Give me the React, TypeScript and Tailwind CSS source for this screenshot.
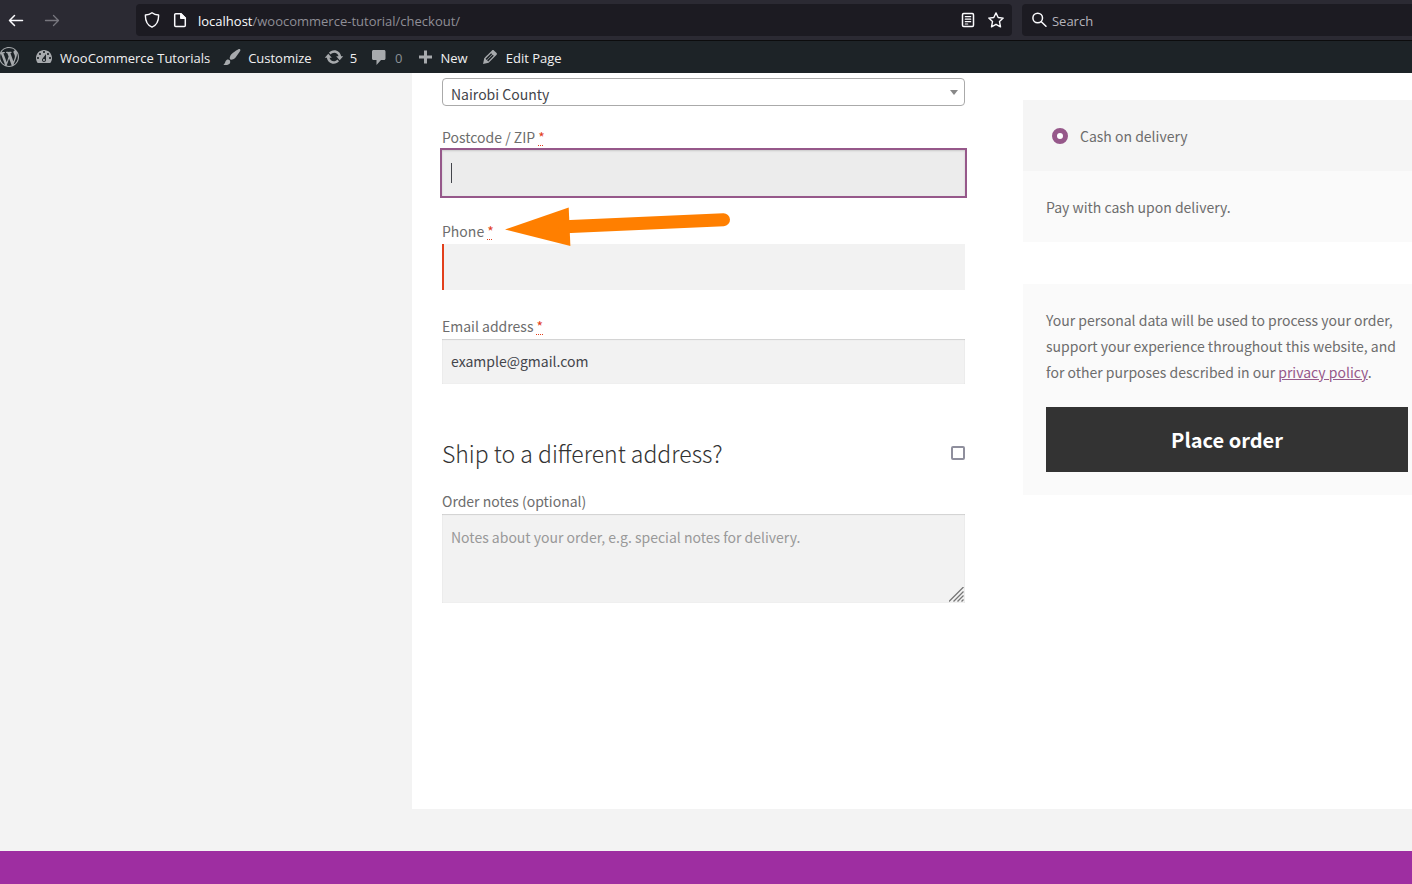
import React, { useState } from "react";

const adminIcons = {
  wordpress:
    "M20 10c0-5.51-4.49-10-10-10C4.48 0 0 4.49 0 10c0 5.52 4.48 10 10 10 5.51 0 10-4.48 10-10zM7.78 15.37L4.37 6.22c.55-.02 1.17-.08 1.17-.08.5-.06.44-1.13-.06-1.11 0 0-1.45.11-2.37.11-.18 0-.37 0-.58-.01C4.12 2.69 6.87 1.11 10 1.11c2.33 0 4.45.87 6.05 2.34-.68-.11-1.65.39-1.65 1.58 0 .74.45 1.36.9 2.1.35.61.55 1.36.55 2.46 0 1.49-1.4 5-1.4 5l-3.03-8.37c.54-.02.82-.17.82-.17.5-.05.44-1.25-.06-1.22 0 0-1.44.12-2.38.12-.87 0-2.33-.12-2.33-.12-.5-.03-.56 1.2-.06 1.22l.92.08 1.26 3.41zM17.41 10c.24-.64.74-1.87.43-4.25.7 1.29 1.05 2.71 1.05 4.25 0 3.29-1.73 6.24-4.4 7.78.97-2.59 1.94-5.2 2.92-7.78zM6.1 18.09C3.12 16.65 1.11 13.53 1.11 10c0-1.3.23-2.48.72-3.59C3.25 10.3 4.67 14.2 6.1 18.09zm4.03-6.63l2.58 6.98c-.86.29-1.76.45-2.71.45-.79 0-1.57-.11-2.29-.33.81-2.38 1.62-4.74 2.42-7.1z",
  dashboard:
    "M3.76 16h12.48c1.1-1.37 1.76-3.11 1.76-5 0-4.42-3.58-8-8-8s-8 3.58-8 8c0 1.89.66 3.63 1.76 5zM10 4c.55 0 1 .45 1 1s-.45 1-1 1-1-.45-1-1 .45-1 1-1zM6 6c.55 0 1 .45 1 1s-.45 1-1 1-1-.45-1-1 .45-1 1-1zm8 0c.55 0 1 .45 1 1s-.45 1-1 1-1-.45-1-1 .45-1 1-1zm-5.37 5.55L12 7v6c0 1.1-.9 2-2 2s-2-.9-2-2c0-.57.24-1.08.63-1.45zM4 10c.55 0 1 .45 1 1s-.45 1-1 1-1-.45-1-1 .45-1 1-1zm12 0c.55 0 1 .45 1 1s-.45 1-1 1-1-.45-1-1 .45-1 1-1zm-5 3c0-.55-.45-1-1-1s-1 .45-1 1 .45 1 1 1 1-.45 1-1z",
  brush:
    "M18.33 3.57s.27-.8-.31-1.36c-.53-.52-1.22-.24-1.22-.24-.61.3-5.76 3.47-7.67 5.57-.86.96-2.06 3.79-1.09 4.82.92.98 3.96-.17 4.79-1 2.06-2.06 5.21-7.17 5.5-7.79zM1.4 17.65c2.37-1.56 1.46-3.41 3.23-4.64.93-.65 2.22-.62 3.08.29.63.67.8 2.57-.16 3.46-1.57 1.45-4 1.55-6.15.89z",
  update:
    "M10.2 3.28c3.53 0 6.43 2.61 6.92 6h2.08l-3.5 4-3.5-4h2.32c-.45-1.97-2.21-3.45-4.32-3.45-1.45 0-2.73.71-3.54 1.78L4.95 5.66C6.23 4.2 8.11 3.28 10.2 3.28zm-.4 13.44c-3.52 0-6.43-2.61-6.92-6H.8l3.5-4c1.17 1.33 2.33 2.67 3.5 4H5.48c.45 1.97 2.21 3.45 4.32 3.45 1.45 0 2.73-.71 3.54-1.78l1.71 1.95c-1.28 1.46-3.15 2.38-5.25 2.38z",
  comment:
    "M4.5 3h10.5c.8 0 1.5.7 1.5 1.5v7c0 .8-.7 1.5-1.5 1.5h-3l-4.5 5v-5H4.5c-.8 0-1.5-.7-1.5-1.5v-7C3 3.7 3.7 3 4.5 3z",
  plus: "M17 8.500v3h-5v5H9v-5H4v-3h5v-5h3v5h5z",
  edit: "M13.89 3.39l2.71 2.72c.46.46.42 1.24.03 1.64l-8.01 8.02-5.56 1.16 1.16-5.58s7.6-7.63 7.99-8.03c.39-.39 1.22-.39 1.68.07zm-2.73 2.79l-5.59 5.61 1.11 1.11 5.54-5.65zm-2.97 8.23l5.58-5.6-1.07-1.08-5.59 5.6z",
};

const adminLinks: { icon: keyof typeof adminIcons; label: string; muted?: boolean }[] = [
  { icon: "dashboard", label: "WooCommerce Tutorials" },
  { icon: "brush", label: "Customize" },
  { icon: "update", label: "5" },
  { icon: "comment", label: "0", muted: true },
  { icon: "plus", label: "New" },
  { icon: "edit", label: "Edit Page" },
];

const AdminIcon = ({ name }: { name: keyof typeof adminIcons }) => (
  <svg viewBox="0 0 20 20" className="size-5 shrink-0 fill-[#a7aaad]" aria-hidden="true">
    <path d={adminIcons[name]} />
  </svg>
);

const Required = () => (
  <abbr
    title="required"
    className="text-[#e2401c] underline decoration-dotted decoration-1 underline-offset-2"
  >
    *
  </abbr>
);

const BrowserBar = () => (
  <div className="flex items-center h-[41px] bg-[#2b2a33] border-b border-[#0c0c0d] text-[13px] font-['Open_Sans',sans-serif]">
    <div className="flex items-center gap-5 w-[136px] pl-2 shrink-0">
      <button type="button" aria-label="Back" className="text-[#fbfbfe]">
        <svg viewBox="0 0 16 16" className="size-4" fill="none" stroke="currentColor" strokeWidth="1.5" strokeLinecap="round" strokeLinejoin="round">
          <path d="M14.5 8.500H1.500M6.500 3.500L1.500 8.500 6.500 13.500" />
        </svg>
      </button>
      <button type="button" aria-label="Forward" className="text-[#77767e]">
        <svg viewBox="0 0 16 16" className="size-4" fill="none" stroke="currentColor" strokeWidth="1.3" strokeLinecap="round" strokeLinejoin="round">
          <path d="M1.500 8.500h13M9.500 3.500L14.500 8.500 9.500 13.500" />
        </svg>
      </button>
    </div>

    {/* Address field */}
    <div className="flex items-center flex-[878] h-8 px-2 bg-[#1c1b22] rounded text-[#fbfbfe]">
      <svg viewBox="0 0 16 16" className="size-4 shrink-0" fill="none" stroke="currentColor" strokeWidth="1.4" strokeLinejoin="round">
        <path d="M8 .8C6.2 2.2 3.8 2.9 1.4 3c-.2 5.5 1.7 10.2 6.6 12.2C12.9 13.2 14.8 8.5 14.6 3 12.2 2.9 9.8 2.2 8 .8z" />
      </svg>
      <svg viewBox="0 0 16 16" className="size-4 shrink-0 ml-3" fill="none" stroke="currentColor" strokeWidth="1.5" strokeLinejoin="round">
        <path d="M3.7 1.7h5.3l4.3 4.3v7.4a1 1 0 0 1-1 1H3.7a1 1 0 0 1-1-1V2.7a1 1 0 0 1 1-1z" />
        <path d="M8.8 1.7v4.5h4.5z" fill="currentColor" />
      </svg>
      <span className="ml-2.5 pt-1 flex-1 text-[#8f8e96]">
        <span className="text-[#fbfbfe]">localhost</span>/woocommerce-tutorial/checkout/
      </span>
      <button type="button" aria-label="Reader view">
        <svg viewBox="0 0 16 16" className="size-4" fill="none" stroke="currentColor" strokeWidth="1.5" strokeLinecap="round">
          <rect x="2.500" y="1.500" width="11" height="13" rx="1.200" />
          <path d="M5.3 4.7h5.4M5.3 7.2h5.4M5.3 9.7h5.4M5.3 12h2.4" strokeWidth="1.2" />
        </svg>
      </button>
      <button type="button" aria-label="Bookmark this page" className="ml-3">
        <svg viewBox="0 0 16 16" className="size-4" fill="none" stroke="currentColor" strokeWidth="1.4" strokeLinejoin="round">
          <path d="M8 .9l2.2 4.6 5 .6-3.7 3.5 1 5.2L8 12.3l-4.5 2.5 1-5.2L.8 6.1l5-.6z" />
        </svg>
      </button>
    </div>

    <label className="flex items-center flex-[388] h-8 ml-2.5 pl-2.5 bg-[#1c1b22] rounded-l text-[#fbfbfe]">
      <svg viewBox="0 0 16 16" className="size-4 shrink-0" fill="none" stroke="currentColor" strokeWidth="1.5" strokeLinecap="round">
        <circle cx="5.700" cy="6" r="4.800" />
        <path d="M9.300 9.700L14 14.300" />
      </svg>
      <input
        type="text"
        aria-label="Search"
        placeholder="Search"
        className="flex-1 min-w-0 ml-1 pt-1 bg-transparent outline-none placeholder:text-[#b5b4bb]"
      />
    </label>
  </div>
);

const AdminBar = () => (
  <nav className="flex items-center h-8 bg-[#1d2327] text-[13px] font-['Open_Sans',sans-serif]">
    <a href="#about" aria-label="About WordPress" className="-ml-px mr-[15px]">
      <AdminIcon name="wordpress" />
    </a>
    <div className="flex items-center gap-3">
      {adminLinks.map((link) => (
        <a key={link.icon} href={`#${link.icon}`} className="flex items-center gap-1.5">
          <AdminIcon name={link.icon} />
          <span className={link.muted ? "pt-1 text-[#8a9095]" : "pt-1 text-[#f0f0f1]"}>
            {link.label}
          </span>
        </a>
      ))}
    </div>
  </nav>
);

const BillingForm = () => {
  const [shipElsewhere, setShipElsewhere] = useState(false);

  return (
    <div className="pt-[5px]">
      <div className="relative mb-[18px]">
        <select
          aria-label="County"
          defaultValue="Nairobi County"
          className="block appearance-none w-full h-7 pt-0.5 pl-2 pr-6 bg-white border border-[#aaa] rounded text-[14px] text-[#43454b]"
        >
          <option>Nairobi County</option>
        </select>
        <span className="absolute right-[7px] top-3 border-x-4 border-t-5 border-x-transparent border-t-[#888] pointer-events-none" />
      </div>

      <div className="mb-[22px]">
        <label htmlFor="postcode" className="block">
          Postcode / ZIP <Required />
        </label>
        <div className="relative">
          <input
            id="postcode"
            type="text"
            className="block w-full h-[46px] px-[9px] bg-[#ececec] text-[#43454b] text-[14px] caret-transparent shadow-[inset_0_1px_2px_rgba(0,0,0,0.15)] outline-2 outline-[#96588a]"
          />
          <span className="absolute left-[9px] top-[13px] w-px h-5 bg-[#43454b]" />
        </div>
      </div>

      <div className="relative mb-[23px]">
        <label htmlFor="phone" className="block">
          Phone <Required />
        </label>
        <input
          id="phone"
          type="tel"
          className="block w-full h-[46px] px-[9px] bg-[#f2f2f2] border-l-2 border-[#e2401c] text-[14px] outline-none"
        />
        {/* Callout arrow pointing at the required mark */}
        <svg viewBox="0 0 226 40" className="absolute left-[63px] -top-[11px] w-[226px] h-10 pointer-events-none" aria-hidden="true">
          <path d="M0 22.500L63.700 .5l1.700 38.500z" fill="#ff7f00" />
          <path d="M60 19.800L218.500 12.700" stroke="#ff7f00" strokeWidth="13" strokeLinecap="round" />
        </svg>
      </div>

      <div className="mb-[49px]">
        <label htmlFor="email" className="block">
          Email address <Required />
        </label>
        <input
          id="email"
          type="email"
          defaultValue="example@gmail.com"
          className="block w-full h-[45px] px-[9px] pb-px bg-[#f2f2f2] text-[#43454b] text-[14px] shadow-[inset_0_1px_1px_rgba(0,0,0,0.125),inset_0_0_1px_rgba(0,0,0,0.15)] outline-none"
        />
      </div>

      <label className="flex items-center justify-between h-10 mb-[15px] text-[23px] text-[#333] font-light">
        Ship to a different address?
        <input
          type="checkbox"
          checked={shipElsewhere}
          onChange={(e) => setShipElsewhere(e.target.checked)}
          className="appearance-none size-3.5 border-2 border-[#8f8f9d] rounded-xs bg-white checked:bg-[#96588a]"
        />
      </label>

      <label htmlFor="notes" className="block">
        Order notes (optional)
      </label>
      <div className="relative">
        <textarea
          id="notes"
          placeholder="Notes about your order, e.g. special notes for delivery."
          className="block w-full h-[89px] px-[9px] py-2.5 resize-none bg-[#f2f2f2] text-[14px] leading-[26px] text-[#43454b] placeholder:text-[#999] shadow-[inset_0_1px_1px_rgba(0,0,0,0.125),inset_0_0_1px_rgba(0,0,0,0.15)] outline-none"
        />
        <svg viewBox="0 0 15 15" className="absolute right-px bottom-px size-[15px]" stroke="#777" strokeWidth="1.3" aria-hidden="true">
          <path d="M0 14.500L14.500 0M4.500 14.500l10-10M8.500 14.500l6-6M12.500 14.500l2-2" />
        </svg>
      </div>
    </div>
  );
};

const OrderPanel = () => (
  <div className="pt-[27px]">
    <label className="flex items-center h-[71px] pl-[29px] bg-[#f5f5f5]">
      <input
        type="radio"
        name="payment"
        defaultChecked
        className="appearance-none size-4 mr-3 rounded-full bg-white border border-[#8f8f9d] checked:border-5 checked:border-[#96588a]"
      />
      Cash on delivery
    </label>
    <p className="flex items-center h-[71px] pl-[23px] bg-[#fafafa]">Pay with cash upon delivery.</p>

    <div className="mt-[42px] pl-[23px] pr-1 py-[23px] bg-[#fafafa]">
      <p className="mb-[22px]">
        Your personal data will be used to process your order, support your experience throughout
        this website, and for other purposes described in our{" "}
        <a href="#privacy" className="text-[#96588a] underline">
          privacy policy
        </a>
        .
      </p>
      <button type="submit" className="block w-full h-[65px] bg-[#333] text-white text-[20px] font-semibold">
        Place order
      </button>
    </div>
  </div>
);

const App = () => {
  return (
    <div className="flex flex-col min-h-screen bg-[#f3f3f3]">
      <BrowserBar />
      <AdminBar />
      <main className="flex-1 ml-[412px] pl-[30px] bg-white text-[14px] leading-[26px] text-[#6d6d6d] font-['Noto_Sans_CJK_SC',sans-serif]">
        <form className="grid grid-cols-[523fr_389fr] gap-[58px]" onSubmit={(e) => e.preventDefault()}>
          <BillingForm />
          <OrderPanel />
        </form>
      </main>
      <footer className="mt-[42px] h-[33px] bg-[#9e2ea1]" />
    </div>
  );
};

export default App;
